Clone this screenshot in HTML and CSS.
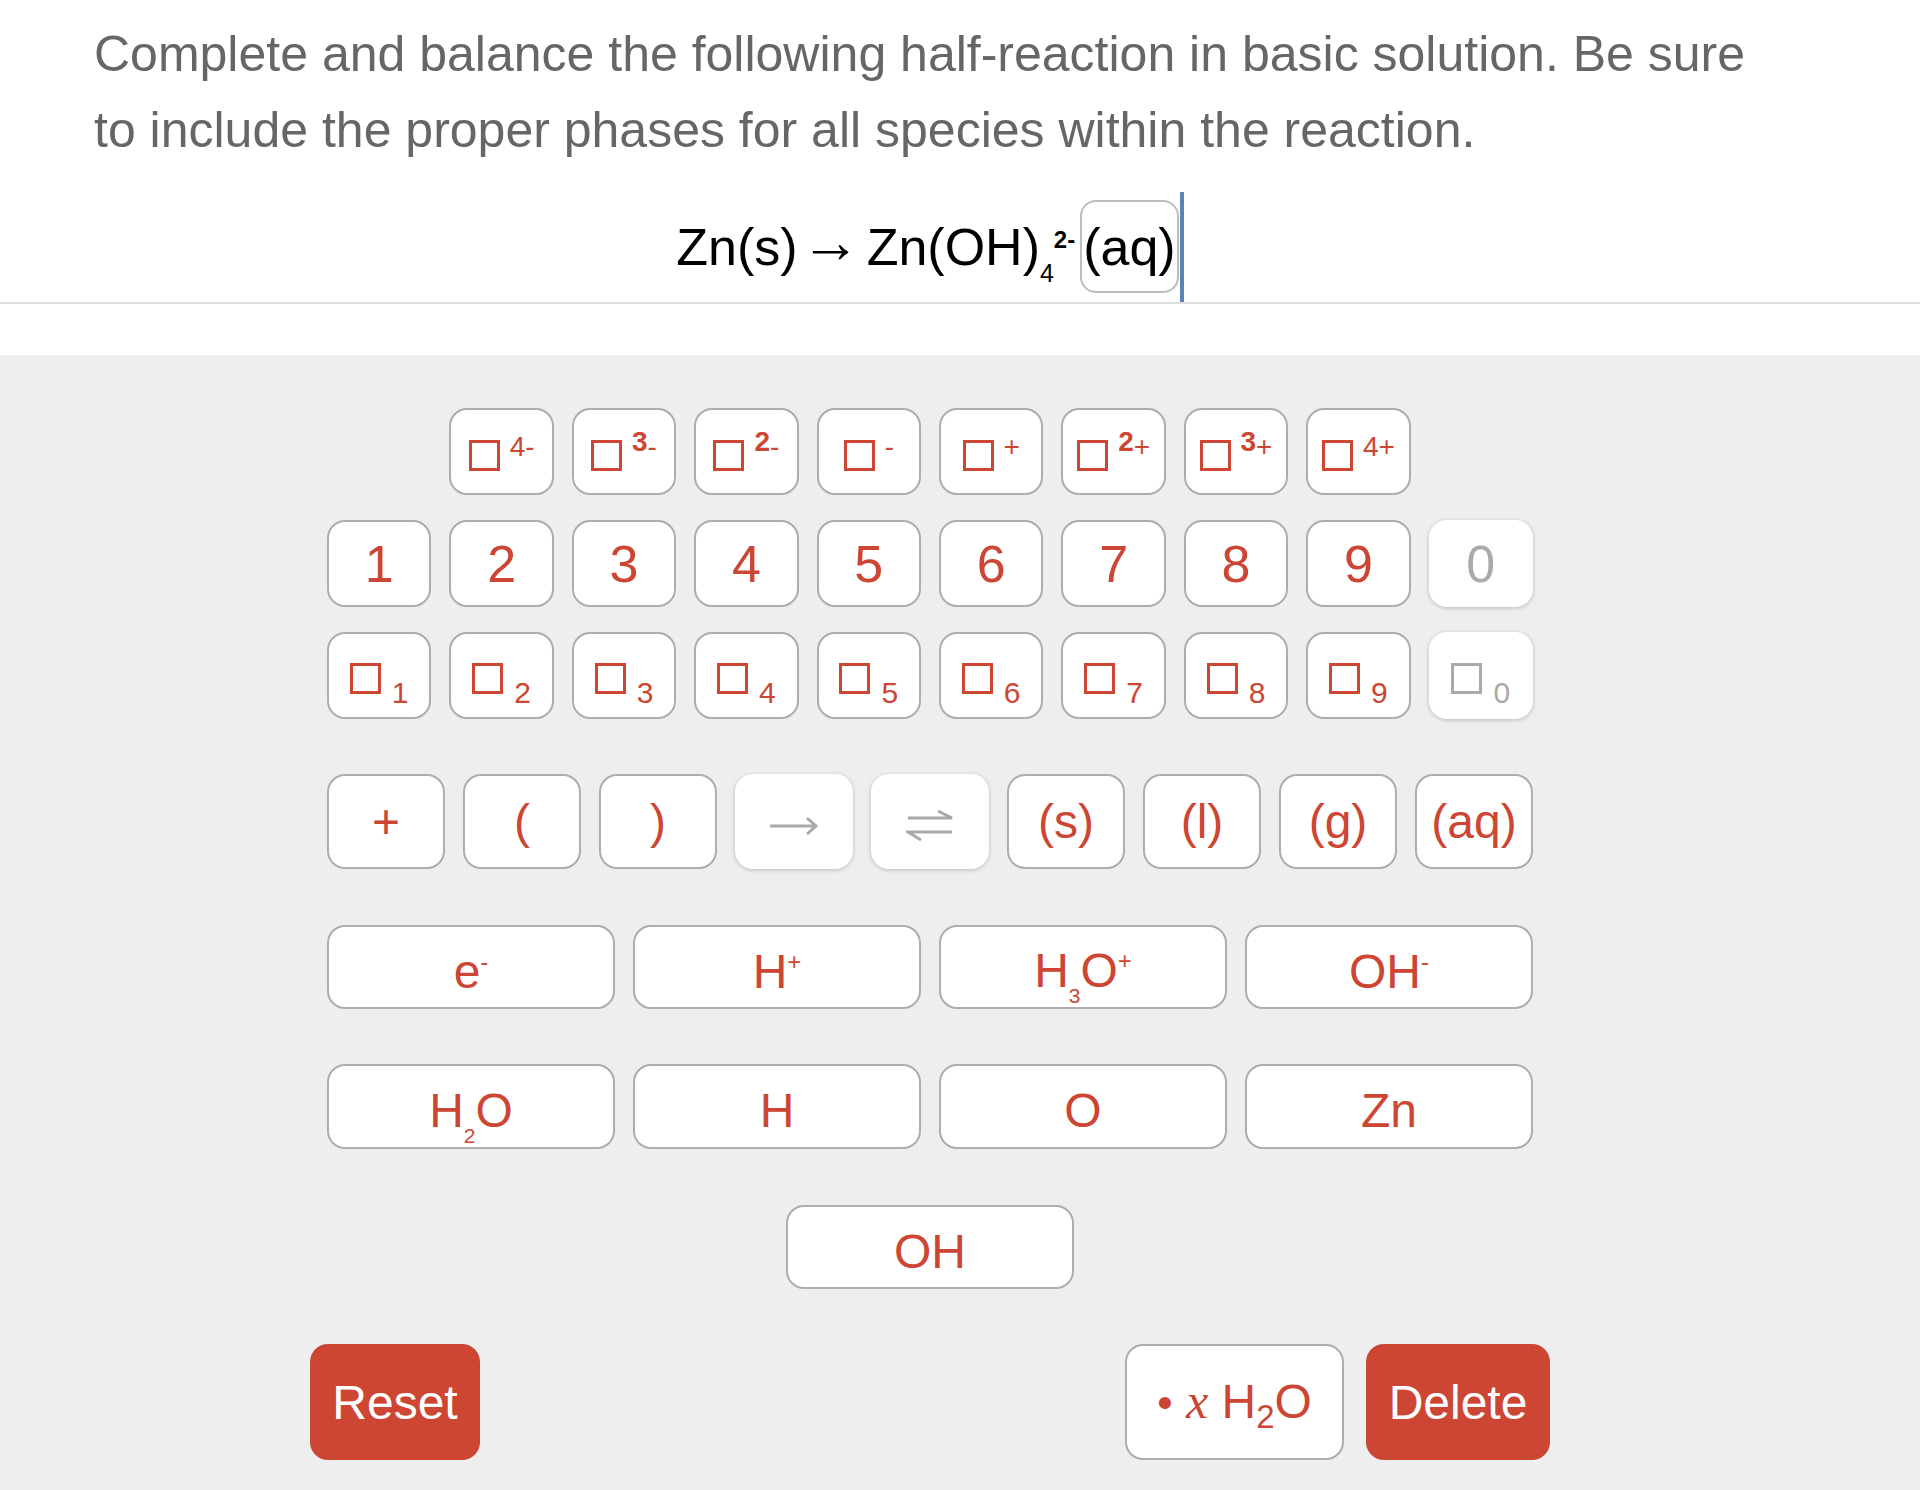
FILE: index.html
```html
<!DOCTYPE html>
<html lang="en">
<head>
<meta charset="utf-8">
<title>Balance half-reaction</title>
<link rel="stylesheet" href="styles.css">
</head>
<body>
<p class="prompt">Complete and balance the following half-reaction in basic solution. Be sure to include the proper phases for all species within the reaction.</p>
<div class="equation">
  <span class="formula">Zn(s)<span class="arrow">→</span>Zn(OH)<sub>4</sub><sup>2-</sup></span>
  <span class="phase-box">(aq)</span>
  <span class="cursor"></span>
</div>
<div class="panel">
  <div class="keypad">
    <div class="grid10">
      <button class="key charge first"><i class="sq"></i><span class="chg">4-</span></button>
      <button class="key charge"><i class="sq"></i><span class="chg"><b>3</b>-</span></button>
      <button class="key charge"><i class="sq"></i><span class="chg"><b>2</b>-</span></button>
      <button class="key charge"><i class="sq"></i><span class="chg">-</span></button>
      <button class="key charge"><i class="sq"></i><span class="chg">+</span></button>
      <button class="key charge"><i class="sq"></i><span class="chg"><b>2</b>+</span></button>
      <button class="key charge"><i class="sq"></i><span class="chg"><b>3</b>+</span></button>
      <button class="key charge"><i class="sq"></i><span class="chg">4+</span></button>

      <button class="key num rowstart">1</button>
      <button class="key num">2</button>
      <button class="key num">3</button>
      <button class="key num">4</button>
      <button class="key num">5</button>
      <button class="key num">6</button>
      <button class="key num">7</button>
      <button class="key num">8</button>
      <button class="key num">9</button>
      <button class="key num off">0</button>

      <button class="key subkey rowstart"><i class="sq"></i><span class="idx">1</span></button>
      <button class="key subkey"><i class="sq"></i><span class="idx">2</span></button>
      <button class="key subkey"><i class="sq"></i><span class="idx">3</span></button>
      <button class="key subkey"><i class="sq"></i><span class="idx">4</span></button>
      <button class="key subkey"><i class="sq"></i><span class="idx">5</span></button>
      <button class="key subkey"><i class="sq"></i><span class="idx">6</span></button>
      <button class="key subkey"><i class="sq"></i><span class="idx">7</span></button>
      <button class="key subkey"><i class="sq"></i><span class="idx">8</span></button>
      <button class="key subkey"><i class="sq"></i><span class="idx">9</span></button>
      <button class="key subkey off"><i class="sq"></i><span class="idx">0</span></button>
    </div>

    <div class="grid9">
      <button class="key sym">+</button>
      <button class="key sym">(</button>
      <button class="key sym">)</button>
      <button class="key sym off icon"><svg width="50" height="20" viewBox="0 0 50 20"><path d="M1 10H47M38 2L47 10L38 18" fill="none" stroke="#a9a9a9" stroke-width="3"/></svg></button>
      <button class="key sym off icon"><svg width="48" height="34" viewBox="0 0 48 34"><path d="M2 9H46L32 2M46 23H2L15 31" fill="none" stroke="#a9a9a9" stroke-width="3"/></svg></button>
      <button class="key sym">(s)</button>
      <button class="key sym">(l)</button>
      <button class="key sym">(g)</button>
      <button class="key sym">(aq)</button>
    </div>

    <div class="grid4 row5">
      <button class="key species"><span>e<sup>-</sup></span></button>
      <button class="key species"><span>H<sup>+</sup></span></button>
      <button class="key species"><span>H<sub>3</sub>O<sup>+</sup></span></button>
      <button class="key species"><span>OH<sup>-</sup></span></button>
    </div>

    <div class="grid4 row6">
      <button class="key species"><span>H<sub>2</sub>O</span></button>
      <button class="key species"><span>H</span></button>
      <button class="key species"><span>O</span></button>
      <button class="key species"><span>Zn</span></button>
    </div>

    <div class="row7">
      <button class="key species wide"><span>OH</span></button>
    </div>
  </div>

  <div class="actions">
    <button class="act reset">Reset</button>
    <div class="act-group">
      <button class="key hydrate"><span><span class="dot">•</span> <i class="x">x</i> H<sub>2</sub>O</span></button>
      <button class="act delete">Delete</button>
    </div>
  </div>
</div>
</body>
</html>
```

FILE: styles.css
```css
html, body {
  margin: 0;
  padding: 0;
}

body {
  font-family: "Liberation Sans", Arial, sans-serif;
  background: #ffffff;
  display: flex;
  flex-direction: column;
  min-height: 100vh;
}

.prompt {
  margin: 0;
  padding: 16px 0 0 94px;
  max-width: 1680px;
  font-size: 50px;
  line-height: 76px;
  color: #666666;
}

.equation {
  height: 134px;
  display: flex;
  justify-content: center;
  align-items: flex-end;
  padding-right: 60px;
  border-bottom: 2px solid #dedede;
  color: #000;
}

.formula {
  font-size: 52px;
  line-height: 60px;
  margin-bottom: 25px;
  white-space: nowrap;
}

.arrow {
  font-size: 60px;
  vertical-align: 3px;
  line-height: 0;
  margin: 0 6px 0 3px;
}

.formula sub {
  font-size: 25px;
  vertical-align: -17px;
  line-height: 0;
}

.formula sup {
  font-size: 24px;
  font-weight: bold;
  vertical-align: 17px;
  line-height: 0;
}

.phase-box {
  font-size: 52px;
  line-height: 74px;
  padding: 8px 1px 7px 1px;
  margin: 0 0 9px 5px;
  border: 2px solid #bdbdbd;
  border-radius: 16px;
}

.cursor {
  width: 4px;
  height: 110px;
  margin-left: 1px;
  background: #5a84b8;
}

.panel {
  flex: 1;
  margin-top: 51px;
  background: #eeeeee;
  padding: 53px 60px 30px 0;
  display: flex;
  flex-direction: column;
  align-items: center;
}

.keypad {
  width: 1206px;
}

.grid10 {
  display: grid;
  grid-template-columns: repeat(10, 1fr);
  grid-auto-rows: 87px;
  column-gap: 18px;
  row-gap: 25px;
}

.grid9 {
  display: grid;
  grid-template-columns: repeat(9, 1fr);
  grid-auto-rows: 95px;
  column-gap: 18px;
  margin-top: 55px;
}

.grid4 {
  display: grid;
  grid-template-columns: repeat(4, 1fr);
  column-gap: 18px;
}

.row5 {
  grid-auto-rows: 84px;
  margin-top: 56px;
}

.row6 {
  grid-auto-rows: 85px;
  margin-top: 55px;
}

.row7 {
  display: flex;
  justify-content: center;
  margin-top: 56px;
}

.key {
  box-sizing: border-box;
  margin: 0;
  padding: 0;
  border: 2px solid #adadad;
  border-radius: 18px;
  background: #ffffff;
  color: #cc4633;
  font-family: "Liberation Sans", Arial, sans-serif;
  display: flex;
  align-items: center;
  justify-content: center;
  white-space: nowrap;
}

.key.off {
  border-color: transparent;
  box-shadow: 0 1px 4px rgba(0, 0, 0, 0.22);
  color: #aaaaaa;
}

.first {
  grid-column-start: 2;
}

.rowstart {
  grid-column-start: 1;
}

.sq {
  display: block;
  box-sizing: border-box;
  width: 31px;
  height: 31px;
  border: 3px solid currentColor;
}

.charge {
  padding-top: 7px;
  gap: 10px;
}

.chg {
  font-size: 28px;
  line-height: 28px;
  margin-bottom: 16px;
}

.chg b {
  position: relative;
  top: -5px;
  font-weight: bold;
}

.num {
  font-size: 52px;
  line-height: 52px;
}

.subkey {
  padding-top: 6px;
  gap: 11px;
}

.idx {
  font-size: 30px;
  line-height: 30px;
  margin-top: 28px;
}

.sym {
  font-size: 48px;
  line-height: 48px;
}

.sym.icon {
  padding-top: 8px;
}

.species {
  font-size: 48px;
  padding-top: 9px;
}

.species > span {
  line-height: 48px;
}

.species sub {
  font-size: 21px;
  vertical-align: -16px;
  line-height: 0;
}

.species sup {
  font-size: 24px;
  vertical-align: 18px;
  line-height: 0;
}

.wide {
  width: 288px;
  height: 84px;
}

.actions {
  width: 1240px;
  margin-top: 55px;
  display: flex;
  justify-content: space-between;
}

.act-group {
  display: flex;
  gap: 22px;
}

.act {
  box-sizing: border-box;
  height: 116px;
  margin: 0;
  padding: 0;
  border: none;
  border-radius: 18px;
  background: #cc4633;
  color: #ffffff;
  font-family: "Liberation Sans", Arial, sans-serif;
  font-size: 48px;
}

.reset {
  width: 170px;
}

.delete {
  width: 184px;
}

.hydrate {
  width: 219px;
  height: 116px;
  font-size: 48px;
}

.hydrate > span {
  line-height: 48px;
}

.hydrate .dot {
  font-size: 44px;
}

.hydrate .x {
  font-family: "Liberation Serif", "Times New Roman", serif;
  font-style: italic;
  font-size: 50px;
}

.hydrate sub {
  font-size: 33px;
  vertical-align: -10px;
  line-height: 0;
}
```
